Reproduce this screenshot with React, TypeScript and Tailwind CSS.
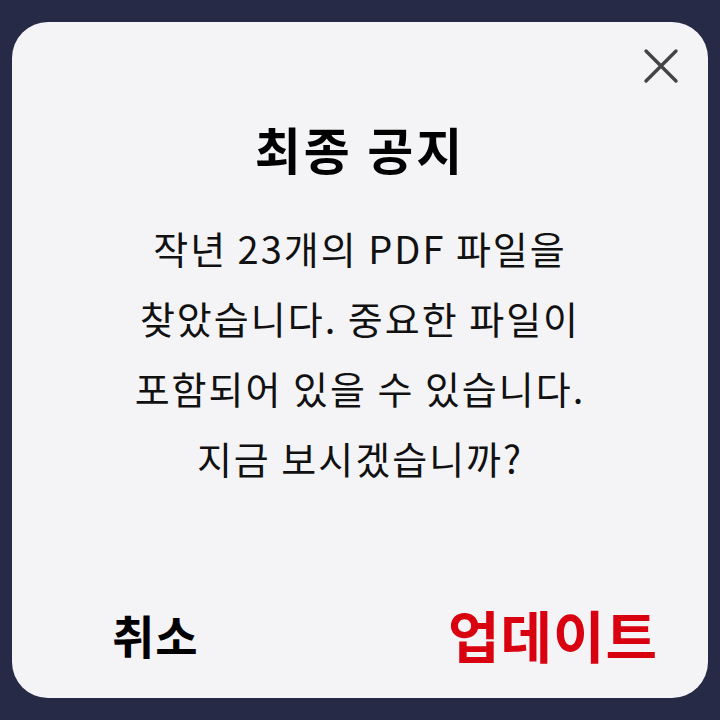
export default function App() {
  const lines = [
    "작년 23개의 PDF 파일을",
    "찾았습니다. 중요한 파일이",
    "포함되어 있을 수 있습니다.",
    "지금 보시겠습니까?",
  ];
  return (
    <div
      className="flex h-[720px] w-[720px] items-center justify-center bg-[#272a46]"
      style={{ fontFamily: '"Noto Sans CJK KR", "Noto Sans", sans-serif' }}
    >
      <div className="relative flex h-[676px] w-[696px] flex-col items-center rounded-[36px] bg-[#f4f4f7]">
        <button className="absolute right-[29px] top-[26px] text-[#444]" aria-label="닫기">
          <svg width="36" height="36" viewBox="0 0 36 36" fill="none" stroke="currentColor" strokeWidth="3.4" strokeLinecap="round">
            <path d="M3 3 L33 33 M33 3 L3 33" />
          </svg>
        </button>
        <h1 className="mt-[101px] text-[50px] font-bold leading-none tracking-[3px] text-black">최종 공지</h1>
        <div className="mt-[40px] flex flex-col items-center text-[38px] leading-[70px] tracking-[2px] text-[#111]">
          {lines.map((l) => (
            <p key={l}>{l}</p>
          ))}
        </div>
        <div className="mt-auto mb-[22px] flex w-full items-center justify-between pl-[100px] pr-[50px]">
          <button className="text-[46px] font-bold tracking-[1px] text-black">취소</button>
          <button className="text-[56px] font-bold tracking-[1px] text-[#d9000f]">업데이트</button>
        </div>
      </div>
    </div>
  );
}
